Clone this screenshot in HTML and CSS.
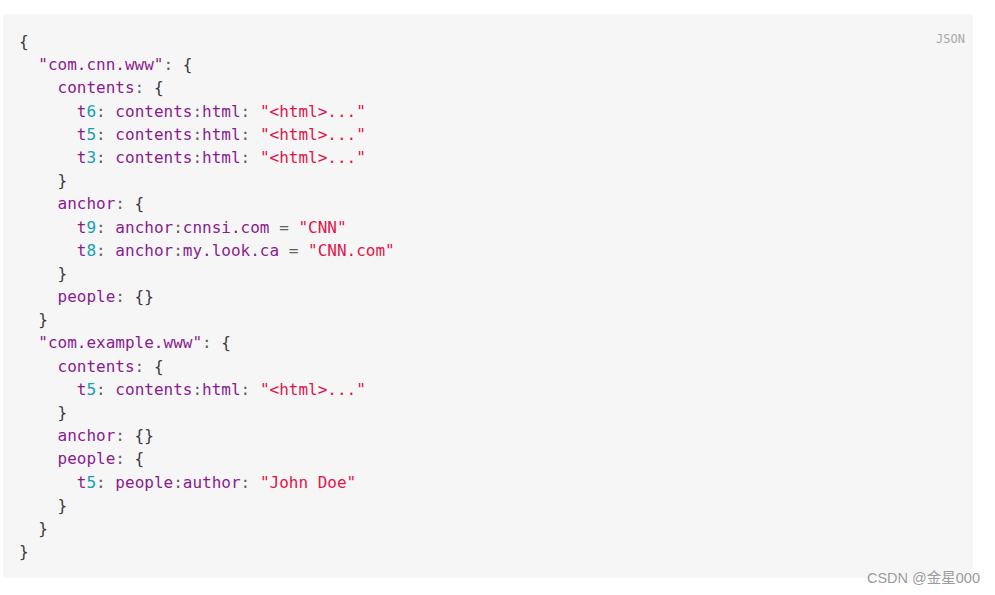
FILE: index.html
```html
<!DOCTYPE html>
<html lang="zh">
<head>
<meta charset="utf-8">
<title>JSON</title>
<link rel="stylesheet" href="styles.css">
</head>
<body>
<div class="page">
  <div class="code-block">
    <span class="lang">JSON</span>
<pre class="code"><span class="p">{</span>
  <span class="k">"com.cnn.www"</span><span class="c">:</span> <span class="p">{</span>
    <span class="k">contents</span><span class="c">:</span> <span class="p">{</span>
      <span class="k">t</span><span class="n">6</span><span class="c">:</span> <span class="k">contents</span><span class="c">:</span><span class="k">html</span><span class="c">:</span> <span class="s">"&lt;html&gt;..."</span>
      <span class="k">t</span><span class="n">5</span><span class="c">:</span> <span class="k">contents</span><span class="c">:</span><span class="k">html</span><span class="c">:</span> <span class="s">"&lt;html&gt;..."</span>
      <span class="k">t</span><span class="n">3</span><span class="c">:</span> <span class="k">contents</span><span class="c">:</span><span class="k">html</span><span class="c">:</span> <span class="s">"&lt;html&gt;..."</span>
    <span class="p">}</span>
    <span class="k">anchor</span><span class="c">:</span> <span class="p">{</span>
      <span class="k">t</span><span class="n">9</span><span class="c">:</span> <span class="k">anchor</span><span class="c">:</span><span class="k">cnnsi.com</span> <span class="c">=</span> <span class="s">"CNN"</span>
      <span class="k">t</span><span class="n">8</span><span class="c">:</span> <span class="k">anchor</span><span class="c">:</span><span class="k">my.look.ca</span> <span class="c">=</span> <span class="s">"CNN.com"</span>
    <span class="p">}</span>
    <span class="k">people</span><span class="c">:</span> <span class="p">{}</span>
  <span class="p">}</span>
  <span class="k">"com.example.www"</span><span class="c">:</span> <span class="p">{</span>
    <span class="k">contents</span><span class="c">:</span> <span class="p">{</span>
      <span class="k">t</span><span class="n">5</span><span class="c">:</span> <span class="k">contents</span><span class="c">:</span><span class="k">html</span><span class="c">:</span> <span class="s">"&lt;html&gt;..."</span>
    <span class="p">}</span>
    <span class="k">anchor</span><span class="c">:</span> <span class="p">{}</span>
    <span class="k">people</span><span class="c">:</span> <span class="p">{</span>
      <span class="k">t</span><span class="n">5</span><span class="c">:</span> <span class="k">people</span><span class="c">:</span><span class="k">author</span><span class="c">:</span> <span class="s">"John Doe"</span>
    <span class="p">}</span>
  <span class="p">}</span>
<span class="p">}</span></pre>
  </div>
  <div class="watermark">CSDN @金星000</div>
</div>
</body>
</html>
```

FILE: styles.css
```css
html, body {
  margin: 0;
  padding: 0;
  background: #ffffff;
}

.page {
  position: relative;
  width: 995px;
  height: 595px;
  padding: 14px 22px 0 3px;
  box-sizing: border-box;
}

.code-block {
  position: relative;
  background: #f6f6f6;
  border-radius: 4px;
  padding: 16px 16px 15px 16px;
}

.lang {
  position: absolute;
  top: 18px;
  right: 8px;
  font-family: "DejaVu Sans Mono", monospace;
  font-size: 12px;
  line-height: 14px;
  color: #a8a8a8;
}

.code {
  margin: 0;
  font-family: "DejaVu Sans Mono", monospace;
  font-size: 16px;
  line-height: 23.18px;
  color: #383838;
  white-space: pre;
}

.p { color: #3a3a3a; }
.c { color: #5f5f5f; }
.k { color: #8a1b8f; }
.n { color: #13a0b0; }
.s { color: #e0154a; }

.watermark {
  position: absolute;
  right: 15px;
  top: 569px;
  font-family: "Liberation Sans", "Noto Sans CJK SC", sans-serif;
  font-size: 14.5px;
  line-height: 18px;
  color: #9a9a9a;
  text-shadow: 0 0 2px #ffffff, 0 0 1px #ffffff;
}
```
